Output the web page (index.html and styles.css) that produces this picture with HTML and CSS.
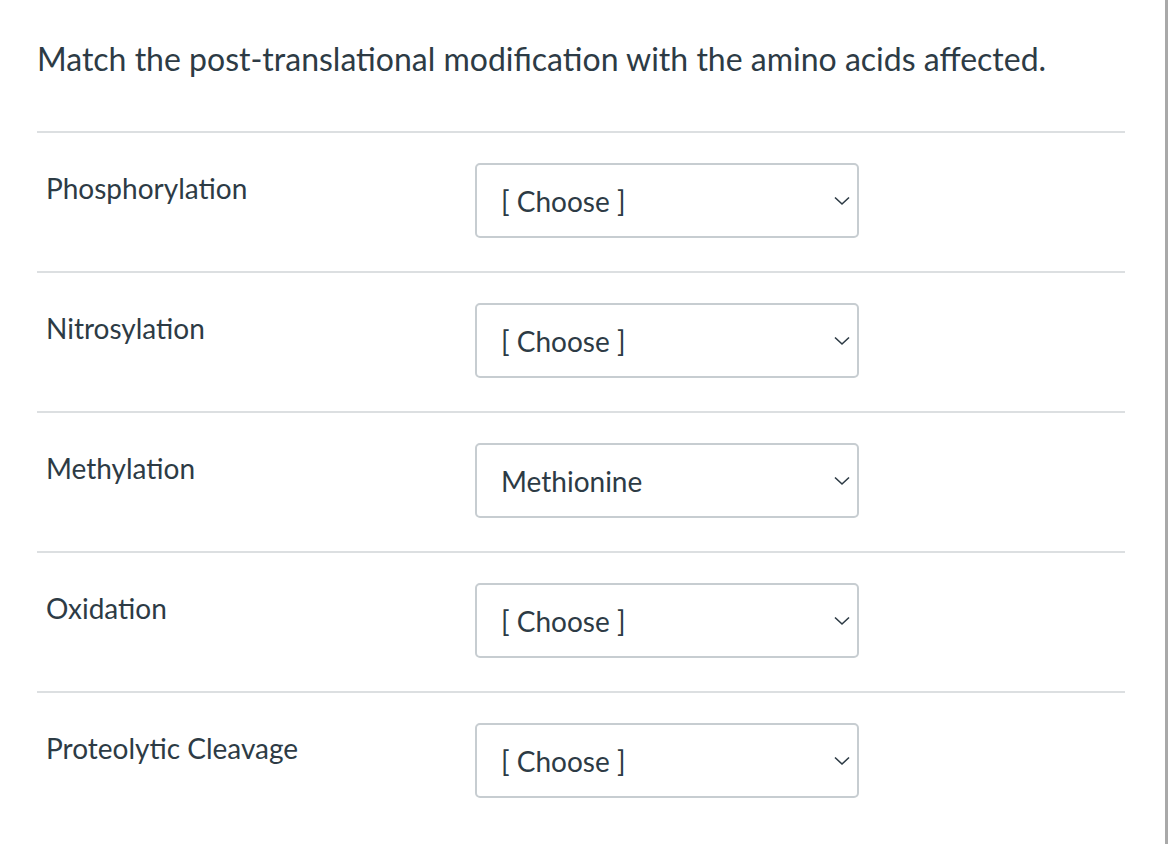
FILE: index.html
```html
<!DOCTYPE html>
<html>
<head>
<meta charset="utf-8">
<link rel="stylesheet" href="styles.css">
</head>
<body>
<div class="page">
  <div class="question">
    <h1 class="prompt">Match the post-translational modification with the amino acids affected.</h1>
    <div class="rows">
      <div class="row">
        <div class="label">Phosphorylation</div>
        <div class="select"><span class="value">[ Choose ]</span><svg class="chev" viewBox="0 0 16 10" width="16" height="10"><path d="M1 1.5 L8 8 L15 1.5" fill="none" stroke="#2d3b45" stroke-width="1.6"/></svg></div>
      </div>
      <div class="row">
        <div class="label">Nitrosylation</div>
        <div class="select"><span class="value">[ Choose ]</span><svg class="chev" viewBox="0 0 16 10" width="16" height="10"><path d="M1 1.5 L8 8 L15 1.5" fill="none" stroke="#2d3b45" stroke-width="1.6"/></svg></div>
      </div>
      <div class="row">
        <div class="label">Methylation</div>
        <div class="select"><span class="value">Methionine</span><svg class="chev" viewBox="0 0 16 10" width="16" height="10"><path d="M1 1.5 L8 8 L15 1.5" fill="none" stroke="#2d3b45" stroke-width="1.6"/></svg></div>
      </div>
      <div class="row">
        <div class="label">Oxidation</div>
        <div class="select"><span class="value">[ Choose ]</span><svg class="chev" viewBox="0 0 16 10" width="16" height="10"><path d="M1 1.5 L8 8 L15 1.5" fill="none" stroke="#2d3b45" stroke-width="1.6"/></svg></div>
      </div>
      <div class="row">
        <div class="label">Proteolytic Cleavage</div>
        <div class="select"><span class="value">[ Choose ]</span><svg class="chev" viewBox="0 0 16 10" width="16" height="10"><path d="M1 1.5 L8 8 L15 1.5" fill="none" stroke="#2d3b45" stroke-width="1.6"/></svg></div>
      </div>
    </div>
  </div>
</div>
</body>
</html>
```
FILE: styles.css
```css
html, body {
  margin: 0;
  padding: 0;
  background: #fff;
}
body {
  font-family: Lato, "Noto Sans", sans-serif;
  color: #2d3b45;
}
.page {
  width: 1168px;
  min-height: 844px;
  border-right: 3px solid #a9a9a9;
  box-sizing: border-box;
}
.question {
  padding: 40px 0 0 37px;
  width: 1088px;
}
.prompt {
  margin: 0;
  font-size: 32px;
  font-weight: 400;
  line-height: 38px;
}
.rows {
  margin-top: 53px;
}
.row {
  border-top: 2px solid #dcdfe1;
  height: 138px;
  display: flex;
  align-items: flex-start;
}
.label {
  width: 429px;
  padding: 39px 0 0 9px;
  font-size: 28px;
  line-height: 32px;
}
.select {
  margin-top: 30px;
  width: 384px;
  height: 75px;
  box-sizing: border-box;
  border: 2px solid #c7cdd1;
  border-radius: 5px;
  display: flex;
  align-items: center;
  justify-content: space-between;
  padding: 0 7px 0 24px;
}
.value {
  font-size: 28px;
  padding-top: 1px;
}
.chev {
  display: block;
}
```
